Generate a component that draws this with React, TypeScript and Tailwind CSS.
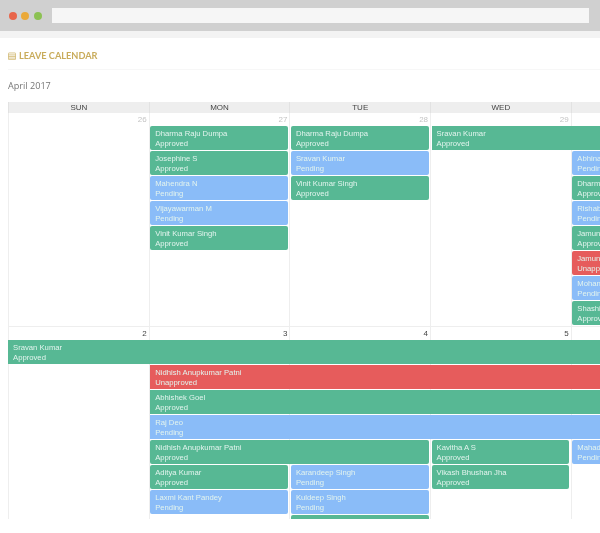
const SANS = "font-['Liberation_Sans',Arial,sans-serif]";

type Ev = { name: string; status: "Approved" | "Pending" | "Unapproved"; col: string; row: string; open?: boolean };

const colours = {
  Approved: "bg-[#57b894]",
  Pending: "bg-[#8abcf8]",
  Unapproved: "bg-[#e65c5c]",
};

const week1: Ev[] = [
  { name: "Dharma Raju Dumpa", status: "Approved", col: "col-start-2", row: "row-start-2" },
  { name: "Josephine S", status: "Approved", col: "col-start-2", row: "row-start-3" },
  { name: "Mahendra N", status: "Pending", col: "col-start-2", row: "row-start-4" },
  { name: "Vijayawarman M", status: "Pending", col: "col-start-2", row: "row-start-5" },
  { name: "Vinit Kumar Singh", status: "Approved", col: "col-start-2", row: "row-start-6" },
  { name: "Dharma Raju Dumpa", status: "Approved", col: "col-start-3", row: "row-start-2" },
  { name: "Sravan Kumar", status: "Pending", col: "col-start-3", row: "row-start-3" },
  { name: "Vinit Kumar Singh", status: "Approved", col: "col-start-3", row: "row-start-4" },
  { name: "Sravan Kumar", status: "Approved", col: "col-start-4 col-end-8", row: "row-start-2", open: true },
  { name: "Abhinav", status: "Pending", col: "col-start-5", row: "row-start-3" },
  { name: "Dharma", status: "Approved", col: "col-start-5", row: "row-start-4" },
  { name: "Rishabh", status: "Pending", col: "col-start-5", row: "row-start-5" },
  { name: "Jamuna", status: "Approved", col: "col-start-5", row: "row-start-6" },
  { name: "Jamuna", status: "Unapproved", col: "col-start-5", row: "row-start-7" },
  { name: "Mohan", status: "Pending", col: "col-start-5", row: "row-start-8" },
  { name: "Shashi", status: "Approved", col: "col-start-5", row: "row-start-9" },
];

const week2: Ev[] = [
  { name: "Sravan Kumar", status: "Approved", col: "col-start-1 col-end-8", row: "row-start-2", open: true },
  { name: "Nidhish Anupkumar Patni", status: "Unapproved", col: "col-start-2 col-end-8", row: "row-start-3", open: true },
  { name: "Abhishek Goel", status: "Approved", col: "col-start-2 col-end-8", row: "row-start-4", open: true },
  { name: "Raj Deo", status: "Pending", col: "col-start-2 col-end-8", row: "row-start-5", open: true },
  { name: "Nidhish Anupkumar Patni", status: "Approved", col: "col-start-2 col-end-4", row: "row-start-6" },
  { name: "Kavitha A S", status: "Approved", col: "col-start-4", row: "row-start-6" },
  { name: "Mahadev", status: "Pending", col: "col-start-5", row: "row-start-6" },
  { name: "Aditya Kumar", status: "Approved", col: "col-start-2", row: "row-start-7" },
  { name: "Karandeep Singh", status: "Pending", col: "col-start-3", row: "row-start-7" },
  { name: "Vikash Bhushan Jha", status: "Approved", col: "col-start-4", row: "row-start-7" },
  { name: "Laxmi Kant Pandey", status: "Pending", col: "col-start-2", row: "row-start-8" },
  { name: "Kuldeep Singh", status: "Pending", col: "col-start-3", row: "row-start-8" },
  { name: "Dharma", status: "Approved", col: "col-start-3", row: "row-start-9" },
];

const lineCols = ["col-start-1", "col-start-2", "col-start-3", "col-start-4", "col-start-5", "col-start-6", "col-start-7"];
const dateCols = ["col-start-1", "col-start-2", "col-start-3", "col-start-4", "col-start-5"];

function Event({ e }: { e: Ev }) {
  return (
    <div
      className={`${e.col} ${e.row} ${colours[e.status]} ${e.col.startsWith("col-start-1") ? "ml-0" : "ml-[1.5px]"} ${e.open ? "mr-0" : "mr-[1.5px] rounded-[2px]"} mb-[1px] pl-[5px] pt-[2.5px] text-[7.7px] leading-[10px] text-[#e3f4ee] overflow-hidden whitespace-nowrap z-10`}
    >
      <div>{e.name}</div>
      <div>{e.status}</div>
    </div>
  );
}

function Week({ dates, muted, events }: { dates: number[]; muted?: boolean; events: Ev[] }) {
  return (
    <div className="grid grid-cols-[repeat(7,140.7px)] grid-rows-[13px_repeat(8,25px)] border-b border-[#eeeeee]">
      {lineCols.map((c) => (
        <div key={c} className={`${c} row-start-1 row-end-10 border-l border-[#eeeeee]`} />
      ))}
      {dates.map((d, i) => (
        <div
          key={d}
          className={`${dateCols[i]} row-start-1 text-right pr-[2px] text-[8px] leading-[13px] ${muted ? "text-[#c4c4c4]" : "text-[#444444]"}`}
        >
          {d}
        </div>
      ))}
      {events.map((e, i) => (
        <Event key={i} e={e} />
      ))}
    </div>
  );
}

export default function App() {
  return (
    <div className={`w-[600px] h-[533px] overflow-hidden bg-white blur-[0.5px] ${SANS}`}>
      <div className="h-[31px] bg-[#d0d0d0] flex items-center pl-[9px] pr-[11px] gap-[4.4px]">
        <span className="w-[8px] h-[8px] rounded-full bg-[#e8654a]" />
        <span className="w-[8px] h-[8px] rounded-full bg-[#eaa93a]" />
        <span className="w-[8px] h-[8px] rounded-full bg-[#8cc152]" />
        <div className="ml-[5.8px] flex-1 h-[15px] bg-[#f6f6f6]" />
      </div>
      <div className="h-[7px] bg-[#f3f3f3]" />

      <div className="ml-[8px] h-[32px] flex items-center gap-[3px] border-b border-[#f7f7f7] pt-[5px]">
        <svg viewBox="0 0 10 10" className="w-[8px] h-[8px] text-[#cdb163]" fill="none" stroke="currentColor" strokeWidth="0.9">
          <rect x="0.5" y="1.2" width="9" height="8.3" rx="0.8" />
          <path d="M0.5 3.6H9.5M0.5 5.6H9.5M0.5 7.6H9.5" />
        </svg>
        <span className="font-['Lato',sans-serif] text-[9.2px] font-bold text-[#c9ac5c]">LEAVE CALENDAR</span>
      </div>

      <div className="ml-[8px] mt-[9px] h-[13px] font-['Open_Sans',sans-serif] text-[9.1px] leading-[13px] text-[#777777]">
        April 2017
      </div>

      <div className="mt-[10px] ml-[8px] w-[592px] h-[417px] overflow-hidden">
        <div className="grid grid-cols-[repeat(7,140.7px)] h-[11px] bg-[#eeeeee] text-[8px] leading-[11px] text-center text-[#444444]">
          {["SUN", "MON", "TUE", "WED", "THU", "FRI", "SAT"].map((d) => (
            <div key={d} className="border-l border-[#e2e2e2]">{d}</div>
          ))}
        </div>
        <Week dates={[26, 27, 28, 29]} muted events={week1} />
        <Week dates={[2, 3, 4, 5]} events={week2} />
      </div>
    </div>
  );
}
